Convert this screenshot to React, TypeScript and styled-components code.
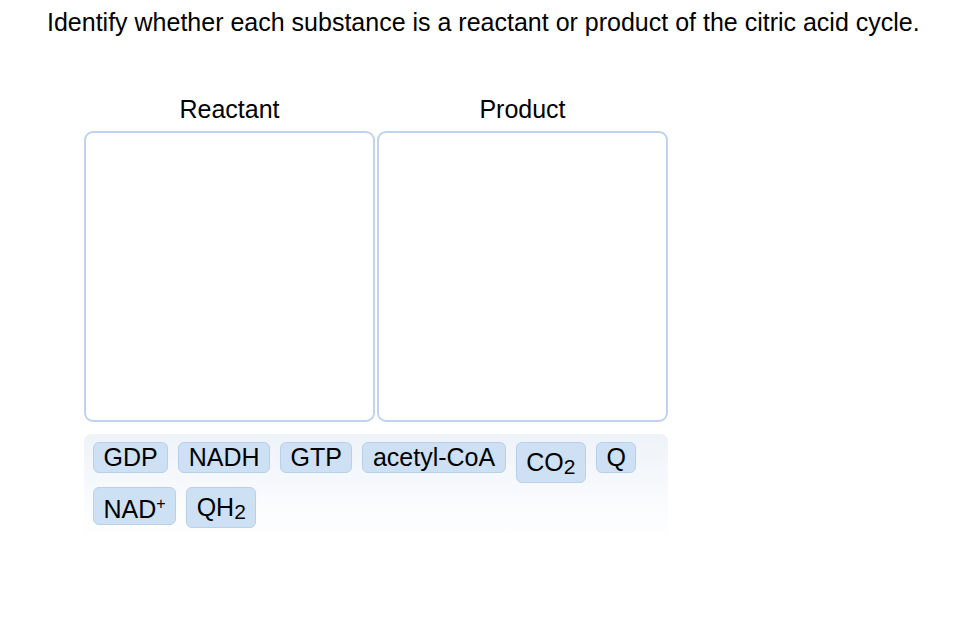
import styled, { createGlobalStyle } from "styled-components";

const GlobalStyle = createGlobalStyle`
  body {
    margin: 0;
    background: #ffffff;
    font-family: "Liberation Sans", Arial, sans-serif;
    color: #000000;
  }
`;

const Page = styled.div`
  padding: 8px 0 0 47px;
`;

const Prompt = styled.div`
  font-size: 25px;
  line-height: 29px;
`;

const Workspace = styled.div`
  margin: 58px 0 0 37px;
  width: 584px;
`;

const Bins = styled.div`
  display: grid;
  grid-template-columns: 291px 291px;
  column-gap: 2px;
`;

const Bin = styled.div`
  display: flex;
  flex-direction: column;
`;

const BinLabel = styled.div`
  font-size: 25px;
  line-height: 29px;
  text-align: center;
  margin-bottom: 7px;
`;

const DropZone = styled.div`
  height: 287px;
  border: 2px solid #bdd3f0;
  border-radius: 9px;
  background: #ffffff;
`;

const Tray = styled.div`
  margin-top: 12px;
  padding: 8px 9px 10px 9px;
  border-radius: 7px;
  background: linear-gradient(#eef3f9, #ffffff);
  display: flex;
  flex-wrap: wrap;
  align-items: flex-start;
  column-gap: 10px;
  row-gap: 4px;
`;

type Script = "none" | "sub" | "sup";

const Chip = styled.div<{ $script?: Script }>`
  font-size: 25px;
  line-height: 29px;
  padding: ${({ $script }) =>
    $script === "sub" ? "5px 9.5px 5px" : $script === "sup" ? "7px 9.5px 0" : "0 9.5px"};
  border: 1px solid #b8d0ec;
  border-radius: 6px;
  background: #cee0f4;
  white-space: nowrap;

  sub {
    font-size: 21px;
    line-height: 0;
    vertical-align: -3px;
  }
  sup {
    font-size: 16px;
    line-height: 0;
    vertical-align: 9px;
  }
`;

export default function App() {
  return (
    <Page>
      <GlobalStyle />
      <Prompt>
        Identify whether each substance is a reactant or product of the citric
        acid cycle.
      </Prompt>
      <Workspace>
        <Bins>
          <Bin>
            <BinLabel>Reactant</BinLabel>
            <DropZone />
          </Bin>
          <Bin>
            <BinLabel>Product</BinLabel>
            <DropZone />
          </Bin>
        </Bins>
        <Tray>
          <Chip>GDP</Chip>
          <Chip>NADH</Chip>
          <Chip>GTP</Chip>
          <Chip>acetyl-CoA</Chip>
          <Chip $script="sub">
            CO<sub>2</sub>
          </Chip>
          <Chip>Q</Chip>
          <Chip $script="sup">
            NAD<sup>+</sup>
          </Chip>
          <Chip $script="sub">
            QH<sub>2</sub>
          </Chip>
        </Tray>
      </Workspace>
    </Page>
  );
}
